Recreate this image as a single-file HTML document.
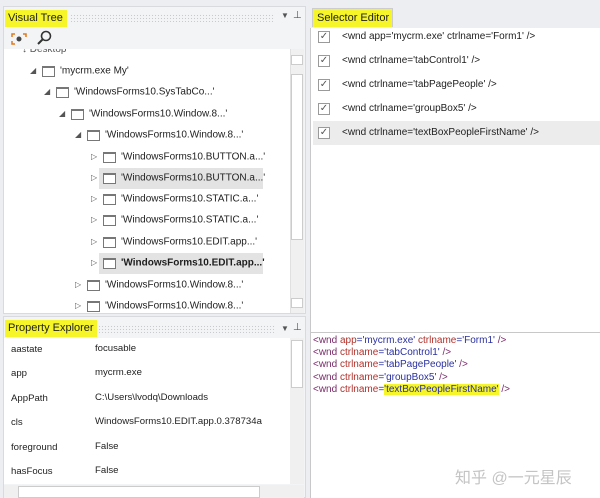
<!DOCTYPE html>
<html><head><meta charset="utf-8"><style>
*{margin:0;padding:0;box-sizing:border-box}
body{width:600px;height:498px;background:#eceef1;font-family:"Liberation Sans",sans-serif;font-size:10px;color:#1e1e1e;position:relative;overflow:hidden}
.a{position:absolute}
.hl{background:#f5f52a;white-space:nowrap}
.dots{background-image:radial-gradient(#c8cacd 0.6px,transparent 0.8px);background-size:3px 3px}
.row{position:absolute;height:20px;line-height:20px;white-space:nowrap;font-size:10px}
.box{display:inline-block;width:13px;height:11px;border:1px solid #777;border-top-width:2px;vertical-align:middle;margin-right:5px;background:#fff}
.arr{display:inline-block;width:12px;color:#555;font-size:8px;vertical-align:middle}
.cb{position:absolute;width:12px;height:12px;border:1px solid #9a9a9a;background:#fff;left:318px;color:#555;font-size:10px;line-height:10px;text-align:center}
.sel{position:absolute;left:342px;white-space:nowrap;font-size:10px}
.p{position:absolute;white-space:nowrap;font-size:9.6px}
.t{color:#7a2a6a}.r{color:#b0302a}.b{color:#2a30a0}
</style></head><body>
<div class="a" style="left:3px;top:6px;width:303px;height:308px;background:#f3f4f6;border:1px solid #d8dadd"></div>
<div class="a hl" style="left:5px;top:10px;height:17px;line-height:17px;padding:0 4px 0 3px;font-size:11px">Visual Tree</div>
<div class="a dots" style="left:70px;top:14px;width:205px;height:8px"></div>
<div class="a" style="left:281px;top:11px;font-size:8px;color:#555">▼</div>
<div class="a" style="left:293px;top:10px;font-size:10px;color:#555">⊥</div>
<svg class="a" style="left:10px;top:30px" width="18" height="16"><path d="M2 7V4h3M13 4h3v3M2 11v3h3" stroke="#e07a1a" stroke-width="1.5" fill="none"/><circle cx="9" cy="9" r="2.5" fill="#444"/></svg>
<svg class="a" style="left:36px;top:30px" width="18" height="16"><circle cx="10" cy="6" r="4.5" stroke="#333" stroke-width="1.6" fill="none"/><path d="M7 9L2 14" stroke="#333" stroke-width="2"/></svg>
<div class="a" style="left:4px;top:49px;width:286px;height:264px;background:#fff;overflow:hidden">
 <div class="row" style="left:18px;top:-9px;color:#555">↕ Desktop</div>
 <div class="row" style="left:26px;top:12px"><span class="arr">◢</span><span class="box"></span>'mycrm.exe My'</div>
 <div class="row" style="left:40px;top:33px"><span class="arr">◢</span><span class="box"></span>'WindowsForms10.SysTabCo...'</div>
 <div class="row" style="left:55px;top:55px"><span class="arr">◢</span><span class="box"></span>'WindowsForms10.Window.8...'</div>
 <div class="row" style="left:71px;top:76px"><span class="arr">◢</span><span class="box"></span>'WindowsForms10.Window.8...'</div>
 <div class="row" style="left:87px;top:98px"><span class="arr">▷</span><span class="box"></span>'WindowsForms10.BUTTON.a...'</div>
 <div class="a" style="left:95px;top:119px;width:164px;height:21px;background:#e3e3e3"></div>
 <div class="row" style="left:87px;top:119px"><span class="arr">▷</span><span class="box"></span>'WindowsForms10.BUTTON.a...'</div>
 <div class="row" style="left:87px;top:140px"><span class="arr">▷</span><span class="box"></span>'WindowsForms10.STATIC.a...'</div>
 <div class="row" style="left:87px;top:161px"><span class="arr">▷</span><span class="box"></span>'WindowsForms10.STATIC.a...'</div>
 <div class="row" style="left:87px;top:183px"><span class="arr">▷</span><span class="box"></span>'WindowsForms10.EDIT.app...'</div>
 <div class="a" style="left:95px;top:204px;width:164px;height:21px;background:#e3e3e3"></div>
 <div class="row" style="left:87px;top:204px;font-weight:bold"><span class="arr" style="font-weight:normal">▷</span><span class="box"></span>'WindowsForms10.EDIT.app...'</div>
 <div class="row" style="left:71px;top:226px"><span class="arr">▷</span><span class="box"></span>'WindowsForms10.Window.8...'</div>
 <div class="row" style="left:71px;top:247px"><span class="arr">▷</span><span class="box"></span>'WindowsForms10.Window.8...'</div>
</div>
<div class="a" style="left:290px;top:49px;width:14px;height:264px;background:#f0f0f0;border-left:1px solid #e0e0e0"></div>
<div class="a" style="left:291px;top:55px;width:12px;height:10px;border:1px solid #ccc;background:#fff"></div>
<div class="a" style="left:291px;top:74px;width:12px;height:166px;border:1px solid #ccc;background:#fff"></div>
<div class="a" style="left:291px;top:298px;width:12px;height:10px;border:1px solid #ccc;background:#fff"></div>
<div class="a" style="left:3px;top:316px;width:303px;height:182px;background:#f3f4f6;border:1px solid #d8dadd"></div>
<div class="a dots" style="left:98px;top:325px;width:177px;height:8px"></div>
<div class="a hl" style="left:5px;top:320px;height:17px;line-height:17px;padding:0 3px;font-size:11px">Property Explorer</div>
<div class="a" style="left:281px;top:324px;font-size:8px;color:#555">▼</div>
<div class="a" style="left:293px;top:322px;font-size:10px;color:#555">⊥</div>
<div class="a" style="left:4px;top:338px;width:286px;height:146px;background:#fff"></div>
<div class="p" style="left:11px;top:344px">aastate</div><div class="p" style="left:95px;top:343px">focusable</div>
<div class="p" style="left:11px;top:368px">app</div><div class="p" style="left:95px;top:367px">mycrm.exe</div>
<div class="p" style="left:11px;top:393px">AppPath</div><div class="p" style="left:95px;top:392px">C:\Users\lvodq\Downloads</div>
<div class="p" style="left:11px;top:417px">cls</div><div class="p" style="left:95px;top:416px">WindowsForms10.EDIT.app.0.378734a</div>
<div class="p" style="left:11px;top:442px">foreground</div><div class="p" style="left:95px;top:441px">False</div>
<div class="p" style="left:11px;top:466px">hasFocus</div><div class="p" style="left:95px;top:465px">False</div>
<div class="a" style="left:290px;top:338px;width:14px;height:146px;background:#f0f0f0"></div>
<div class="a" style="left:291px;top:340px;width:12px;height:48px;border:1px solid #ccc;background:#fff"></div>
<div class="a" style="left:4px;top:485px;width:300px;height:13px;background:#f0f0f0"></div>
<div class="a" style="left:18px;top:486px;width:242px;height:12px;border:1px solid #ccc;background:#fff"></div>
<div class="a" style="left:310px;top:6px;width:290px;height:492px;background:#fff;border-left:1px solid #c8c8c8"></div>
<div class="a" style="left:310px;top:6px;width:290px;height:22px;background:#eceef1"></div>
<div class="a hl" style="left:312px;top:8px;height:19px;line-height:19px;padding:0 3px 0 4px;border:1px solid #ccc;border-bottom:none;font-size:11px">Selector Editor</div>
<div class="a" style="left:313px;top:121px;width:287px;height:24px;background:#ececec"></div>
<div class="cb" style="top:31px">✓</div><div class="sel" style="top:31px">&lt;wnd app='mycrm.exe' ctrlname='Form1' /&gt;</div>
<div class="cb" style="top:55px">✓</div><div class="sel" style="top:55px">&lt;wnd ctrlname='tabControl1' /&gt;</div>
<div class="cb" style="top:79px">✓</div><div class="sel" style="top:79px">&lt;wnd ctrlname='tabPagePeople' /&gt;</div>
<div class="cb" style="top:103px">✓</div><div class="sel" style="top:103px">&lt;wnd ctrlname='groupBox5' /&gt;</div>
<div class="cb" style="top:127px">✓</div><div class="sel" style="top:127px">&lt;wnd ctrlname='textBoxPeopleFirstName' /&gt;</div>
<div class="a" style="left:311px;top:332px;width:289px;height:1px;background:#c8c8c8"></div>
<div class="a" style="left:313px;top:335px;font-size:10px;line-height:12.2px;white-space:nowrap">
<span class="t">&lt;wnd </span><span class="r">app</span><span class="b">=</span><span class="b">'mycrm.exe'</span> <span class="r">ctrlname</span><span class="b">='Form1'</span> <span class="t">/&gt;</span><br>
<span class="t">&lt;wnd </span><span class="r">ctrlname</span><span class="b">='tabControl1'</span> <span class="t">/&gt;</span><br>
<span class="t">&lt;wnd </span><span class="r">ctrlname</span><span class="b">='tabPagePeople'</span> <span class="t">/&gt;</span><br>
<span class="t">&lt;wnd </span><span class="r">ctrlname</span><span class="b">='groupBox5'</span> <span class="t">/&gt;</span><br>
<span class="t">&lt;wnd </span><span class="r">ctrlname</span><span class="b">=</span><span class="b hl">'textBoxPeopleFirstName'</span> <span class="t">/&gt;</span>
</div>
<div class="a" style="left:455px;top:464px;font-family:'Liberation Sans','Noto Sans CJK SC',sans-serif;font-size:16px;color:#c4c4c4;white-space:nowrap">知乎 @一元星辰</div>
</body></html>
